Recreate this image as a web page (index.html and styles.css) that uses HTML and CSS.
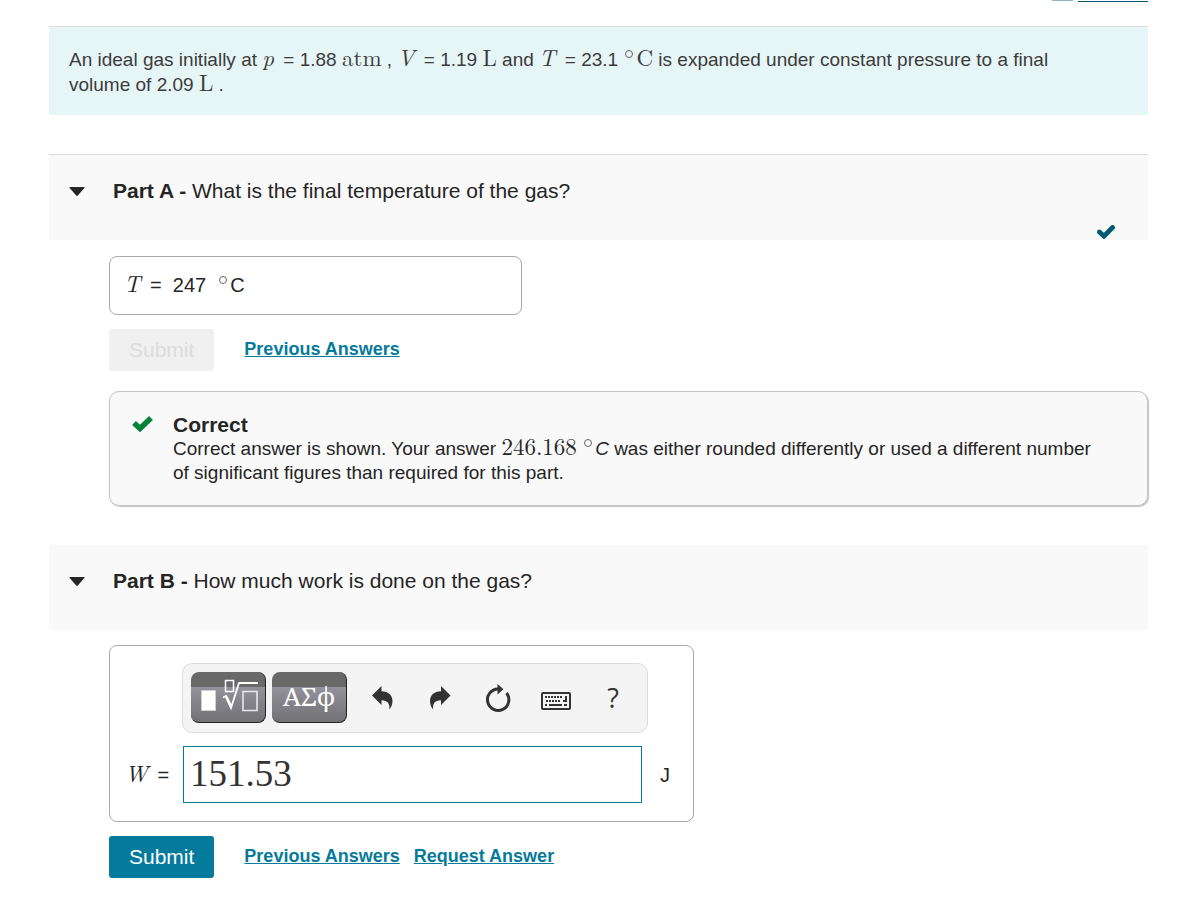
FILE: index.html
```html
<!DOCTYPE html>
<html lang="en">
<head>
    <meta charset="UTF-8">
    <meta name="viewport" content="width=device-width, initial-scale=1.0">
    <title>Ideal gas expansion</title>
    <link rel="stylesheet" href="styles.css">
</head>
<body>
    <div class="top-strip">
        <span class="strip-icon"></span>
        <span class="strip-line"></span>
    </div>

    <main class="page">
        <p class="intro">An ideal gas initially at <i class="math">p</i> = 1.88 <span class="math">atm</span> , <i class="math">V</i> = 1.19 <span class="math">L</span> and <i class="math">T</i> = 23.1 <span class="degree"></span><span class="math">C</span> is expanded under constant pressure to a final volume of 2.09 <span class="math">L</span> .</p>

        <section class="part part-a">
            <div class="part-header">
                <button class="toggle" type="button" aria-label="Collapse Part A">
                    <svg width="16" height="9" viewBox="0 0 16 9"><path d="M1 0h14q1 0 .4.9L8.8 8.5q-.8.8-1.6 0L.6.9Q0 0 1 0z" fill="#252525"/></svg>
                </button>
                <h2 class="part-title"><b>Part A -</b> What is the final temperature of the gas?</h2>
                <svg class="part-check" width="18" height="14" viewBox="0 0 18 14"><path d="M2.500 7 7 11.200 15.500 2.500" fill="none" stroke="#005a70" stroke-width="4.800" stroke-linecap="round"/></svg>
            </div>
            <div class="part-body">
                <div class="answer-static"><i class="math">T</i> = &nbsp;247 &nbsp;<span class="degree"></span>C</div>
                <div class="actions">
                    <button class="submit" type="button" disabled>Submit</button>
                    <a class="action-link" href="#">Previous Answers</a>
                </div>
                <div class="feedback">
                    <svg class="feedback-check" width="22" height="17" viewBox="0 0 22 17"><path d="M3 8 9 13.500 20 3" fill="none" stroke="#038238" stroke-width="5.500"/></svg>
                    <div class="feedback-text">
                        <h3 class="feedback-title">Correct</h3>
                        <p>Correct answer is shown. Your answer <span class="math">246.168</span> <span class="degree"></span><i>C</i> was either rounded differently or used a different number of significant figures than required for this part.</p>
                    </div>
                </div>
            </div>
        </section>

        <section class="part part-b">
            <div class="part-header">
                <button class="toggle" type="button" aria-label="Collapse Part B">
                    <svg width="16" height="9" viewBox="0 0 16 9"><path d="M1 0h14q1 0 .4.9L8.8 8.5q-.8.8-1.6 0L.6.9Q0 0 1 0z" fill="#252525"/></svg>
                </button>
                <h2 class="part-title"><b>Part B -</b> How much work is done on the gas?</h2>
            </div>
            <div class="part-body">
                <div class="answer-box">
                    <div class="toolbar">
                        <div class="palettes">
                            <button class="palette" type="button" aria-label="Templates">
                                <svg width="60" height="34" viewBox="0 0 60 34" fill="none" stroke="#fff">
                                    <path d="M3.500 11.500h14v20h-14z" fill="#fff" stroke="#d0d0d4"/>
                                    <path d="M27.500 1.500h8v11h-8z" stroke-width="1.500"/>
                                    <path d="M25 18.500 28 17l5 12L41 4h19" stroke-width="1.800"/>
                                    <path d="M28.500 18l4.500 9.500" stroke-width="2.800"/>
                                    <path d="M45 12.500h14v19h-14z" stroke="#e8e8ea" stroke-width="1.600"/>
                                </svg>
                            </button>
                            <button class="palette" type="button" aria-label="Greek letters">ΑΣϕ</button>
                        </div>
                        <button class="tool" type="button" aria-label="Undo">
                            <svg width="22" height="24" viewBox="0 0 22 24"><path d="M0 9.500 9.500 0v5.200C16.500 5.300 20.500 9.500 20.500 15c0 3.500-1.200 6.200-3.200 8.500.8-5.500-1.500-9-7.800-9.200V19z" fill="#333"/></svg>
                        </button>
                        <button class="tool" type="button" aria-label="Redo">
                            <svg width="22" height="24" viewBox="0 0 22 24"><path d="M21.500 9.500 12 0v5.200C5 5.300 1 9.500 1 15c0 3.500 1.200 6.200 3.200 8.500-.8-5.500 1.500-9 7.800-9.200V19z" fill="#333"/></svg>
                        </button>
                        <button class="tool" type="button" aria-label="Reset">
                            <svg width="26" height="28" viewBox="0 0 26 28"><path d="M21.500 9A10.700 10.700 0 1 1 13 5" fill="none" stroke="#333" stroke-width="3"/><path d="M12.500 0 18.500 5.200 12.500 10.500z" fill="#333"/></svg>
                        </button>
                        <button class="tool keyboard" type="button" aria-label="Keyboard shortcuts">
                            <svg width="30" height="18" viewBox="0 0 30 18" fill="none" stroke="#333" stroke-width="2">
                                <rect x="1" y="1" width="28" height="16" rx="1"/>
                                <path d="M4 5h18M5 9h15" stroke-dasharray="2 1"/>
                                <path d="M25 4v5h-3M4 13h2M8 13h13M23 13h3"/>
                            </svg>
                        </button>
                        <button class="tool" type="button" aria-label="Help">?</button>
                    </div>
                    <label class="answer-label" for="work"><i class="math">W</i> =</label>
                    <input class="answer-input" id="work" type="text" value="151.53">
                    <span class="answer-unit">J</span>
                </div>
                <div class="actions">
                    <button class="submit" type="button">Submit</button>
                    <a class="action-link" href="#">Previous Answers</a>
                    <a class="action-link" href="#">Request Answer</a>
                </div>
            </div>
        </section>
    </main>
</body>
</html>
```
FILE: styles.css
```css
* {
    box-sizing: border-box;
}
body {
    margin: 0;
    padding: 0 29px 0 49px;
    background-color: #fff;
    color: #252525;
    font-family: "Liberation Sans", Arial, sans-serif;
    font-size: 20px;
    line-height: 24px;
}
h2, h3, p {
    margin: 0;
    font-size: inherit;
}
button {
    font-family: inherit;
    border: none;
    padding: 0;
    cursor: pointer;
}
svg {
    display: block;
}
.math {
    font-family: "Latin Modern Roman", "CMU Serif", "Liberation Serif", serif;
    font-size: 23px;
    line-height: 0;
}
i.math {
    margin-right: 4px;
}
.degree {
    display: inline-block;
    width: 8px;
    height: 8px;
    margin: 0 3px 0 2px;
    border: 1px solid #666;
    border-radius: 50%;
    vertical-align: 8px;
}
.top-strip {
    display: flex;
    justify-content: flex-end;
    gap: 5px;
    height: 26px;
}
.strip-icon {
    width: 21px;
    height: 1px;
    background-color: #8fb8c2;
}
.strip-line {
    width: 70px;
    height: 2px;
    border-bottom: 1px solid #005a70;
}
.intro {
    padding: 20px 60px 18px 20px;
    border-top: 1px solid #dcdcdc;
    background-color: #e6f5f6;
    color: #3c3c3c;
    font-size: 19px;
    line-height: 25px;
}
.part {
    margin-top: 39px;
}
.part-header {
    display: flex;
    align-items: flex-start;
    height: 85px;
    padding: 24px 33px 1px 20px;
    background-color: #f9f9f9;
}
.part-a .part-header {
    height: 86px;
    border-top: 1px solid #dcdcdc;
}
.toggle {
    width: 44px;
    height: 24px;
    background: none;
}
.part-title {
    flex: 1;
    font-weight: normal;
    font-size: 21px;
}
.part-check {
    align-self: flex-end;
}
.part-body {
    padding: 16px 0 0 60px;
}
.part-b .part-body {
    padding-top: 15px;
}
.answer-static {
    width: 413px;
    max-width: 100%;
    padding: 16px 14px;
    border: 1px solid #a9a9a9;
    border-radius: 8px;
    line-height: 25px;
}
.actions {
    display: flex;
    align-items: center;
    gap: 14px;
    margin-top: 14px;
}
.submit {
    height: 42px;
    padding: 0 20px;
    margin-right: 16px;
    border-radius: 3px;
    background-color: #047a9c;
    color: #fff;
    font-size: 21px;
}
.submit:disabled {
    background-color: #f0f0f0;
    color: #dcdcdc;
    cursor: default;
}
.action-link {
    padding-bottom: 2px;
    color: #047a9c;
    font-size: 18px;
    font-weight: bold;
}
.feedback {
    display: flex;
    gap: 20px;
    margin-top: 20px;
    padding: 21px 40px 20px 21px;
    border: 1px solid #c4c4c4;
    border-radius: 10px;
    background-color: #f9f9f9;
    box-shadow: 1px 1px 1px #c4c4c4;
    font-size: 19px;
}
.feedback-title {
    font-size: 21px;
}
.feedback-check {
    flex: none;
    margin-top: 2px;
}
.answer-box {
    display: grid;
    grid-template-columns: 58px 1fr 33px;
    row-gap: 13px;
    align-items: center;
    width: 585px;
    max-width: 100%;
    padding: 17px 18px 18px 15px;
    border: 1px solid #a9a9a9;
    border-radius: 8px;
}
.toolbar {
    grid-column: 2 / 4;
    display: flex;
    align-items: center;
    gap: 6px;
    height: 70px;
    margin: 0 27px 0 -1px;
    padding: 0 8px 1px;
    border: 1px solid #dcdcdc;
    border-radius: 10px;
    background-color: #f4f4f4;
}
.palettes {
    display: flex;
    gap: 6px;
    margin-right: 4px;
}
.palette {
    display: flex;
    justify-content: center;
    align-items: center;
    width: 75px;
    height: 51px;
    padding-bottom: 2px;
    border-right: 1px solid #222;
    border-bottom: 1px solid #222;
    border-radius: 8px;
    background: linear-gradient(#696969 0, #696969 15px, #93919b 15px, #727174 100%);
    color: #fff;
    font-family: "Noto Serif", "Liberation Serif", serif;
    font-size: 26px;
}
.tool {
    display: flex;
    justify-content: center;
    align-items: center;
    flex: 1;
    height: 51px;
    background: none;
    color: #333;
    font-family: "Open Sans", sans-serif;
    font-size: 27px;
}
.keyboard {
    padding-top: 6px;
}
.answer-input {
    width: 100%;
    height: 57px;
    padding: 0 6px 2px;
    border: 1px solid #047a9c;
    color: #333;
    font-family: "Liberation Serif", serif;
    font-size: 37px;
}
.answer-unit {
    padding-right: 5px;
    text-align: right;
}
```
